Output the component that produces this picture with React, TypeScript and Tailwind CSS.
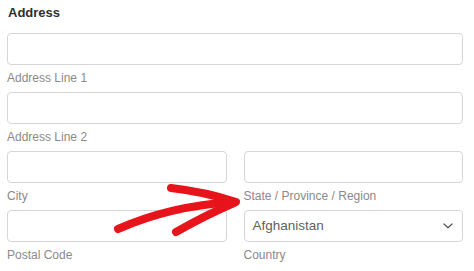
import React from "react";

const font = { fontFamily: '"Liberation Sans", Arial, sans-serif' };

function Field({ label, select }: { label: string; select?: string }) {
  return (
    <div className="flex flex-col">
      {select ? (
        <div className="flex h-[32px] items-center justify-between rounded-[4px] border border-[#d6d6d6] bg-white pl-[8px] pr-[9px]">
          <span className="text-[13.5px] leading-none text-[#5f5f5f]">{select}</span>
          <svg width="10" height="6" viewBox="0 0 10 6" fill="none">
            <path d="M1 1 L5 4.8 L9 1" stroke="#555" strokeWidth="1.2" strokeLinecap="round" strokeLinejoin="round" />
          </svg>
        </div>
      ) : (
        <div className="h-[32px] rounded-[4px] border border-[#d6d6d6] bg-white" />
      )}
      <div className="mt-[5px] h-[16px] text-[12px] leading-[16px] text-[#8a8a8a]">{label}</div>
    </div>
  );
}

export default function App() {
  return (
    <div className="relative h-[271px] w-[474px] overflow-hidden bg-white pl-[7px] pr-[11px] pt-[5px]" style={font}>
      <h2 className="mb-[12px] ml-[1px] h-[16px] text-[13px] font-bold leading-[16px] text-[#2f2f2f]">Address</h2>
      <div className="flex flex-col gap-[6px]">
        <Field label="Address Line 1" />
        <Field label="Address Line 2" />
        <div className="grid grid-cols-2 gap-x-[17px] gap-y-[6px]">
          <Field label="City" />
          <Field label="State / Province / Region" />
          <Field label="Postal Code" />
          <Field label="Country" select="Afghanistan" />
        </div>
      </div>
      <svg className="pointer-events-none absolute inset-0" width="474" height="271" viewBox="0 0 474 271">
        <g stroke="#e8141b" strokeWidth="8" strokeLinecap="round" fill="none">
          <path d="M118 229 Q 170 206 233 202" />
          <path d="M171 188 Q 206 192 236 202" />
          <path d="M176 232 Q 206 215 234 203" />
        </g>
      </svg>
    </div>
  );
}
